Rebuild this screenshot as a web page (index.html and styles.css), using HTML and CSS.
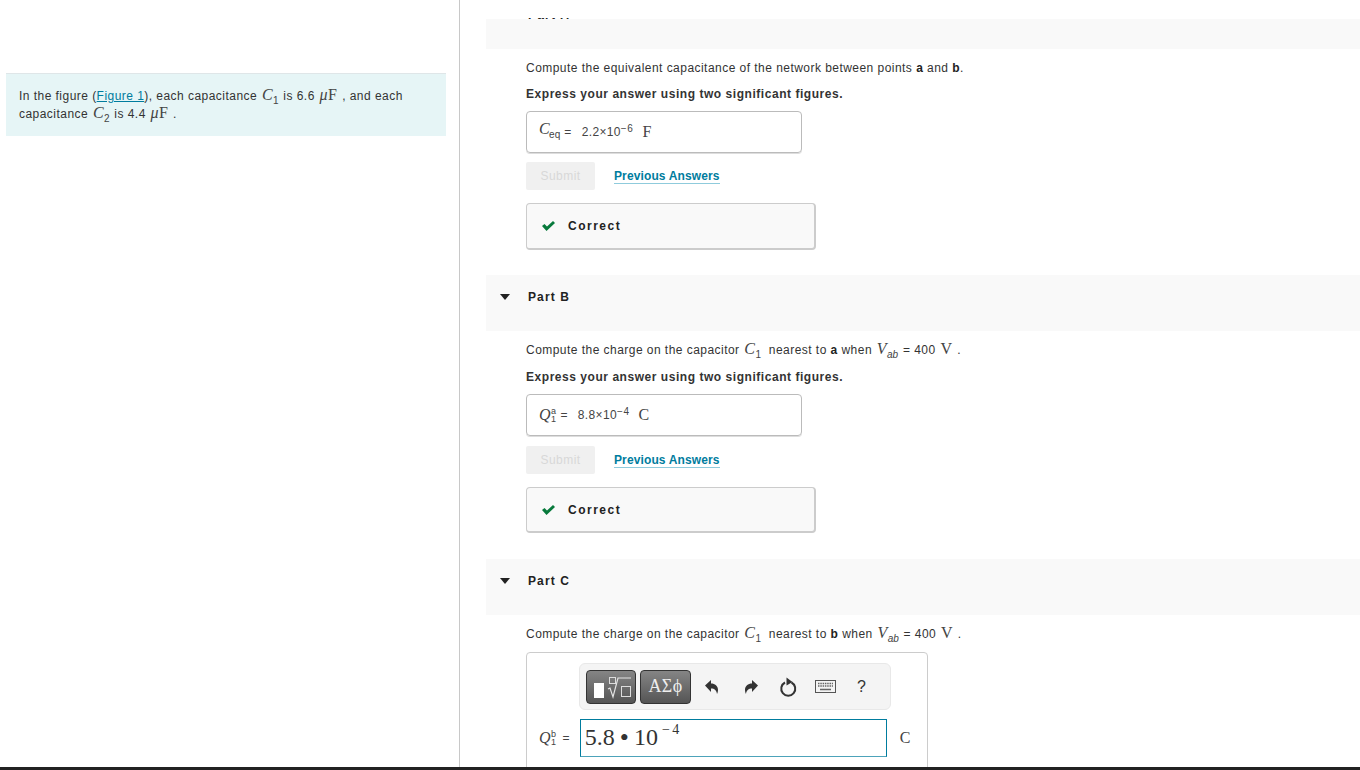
FILE: index.html
```html
<!DOCTYPE html>
<html lang="en">
<head>
<meta charset="utf-8">
<title>Capacitance network</title>
<link rel="stylesheet" href="styles.css">
</head>
<body>
<div class="page">
  <aside class="left">
    <div class="intro">
      In the figure (<a class="link" href="#">Figure 1</a>), each capacitance <span class="m"><i>C</i><sub>1</sub></span> is 6.6 <span class="m"><i>μ</i>F</span> , and each<br>
      capacitance <span class="m"><i>C</i><sub>2</sub></span> is 4.4 <span class="m"><i>μ</i>F</span> .
    </div>
  </aside>
  <main class="right">
    <div class="clip"><div class="clip-window"><span class="clip-text">Part A</span></div></div>
    <div class="part-head short"></div>
    <section class="part-body a">
      <p class="prompt">Compute the equivalent capacitance of the network between points <b>a</b> and <b>b</b>.</p>
      <p class="express">Express your answer using two significant figures.</p>
      <div class="answer">
        <span class="m"><i>C</i><sub class="sans">eq</sub></span><span class="eq">=</span><span class="val">2.2×10<sup>−6</sup></span><span class="m unit">F</span>
      </div>
      <div class="actions">
        <span class="submit">Submit</span>
        <a class="prev" href="#">Previous Answers</a>
      </div>
      <div class="correct">
        <svg class="check" width="15" height="12" viewBox="0 0 15 12"><path d="M1 6l2.500-2 2.500 2.500L12 1l2 2-8.500 8z" fill="#087a3c"/></svg>
        <span>Correct</span>
      </div>
    </section>

    <div class="part-head"><span class="tri"></span><span class="part-title">Part B</span></div>
    <section class="part-body b">
      <p class="prompt">Compute the charge on the capacitor <span class="m cap"><i>C</i><sub>1</sub></span> nearest to <b>a</b> when <span class="m"><i>V</i><sub><i>ab</i></sub></span> = 400 <span class="m">V</span> .</p>
      <p class="express">Express your answer using two significant figures.</p>
      <div class="answer">
        <span class="m stack"><i>Q</i><span class="scripts"><span>a</span><span>1</span></span></span><span class="eq">=</span><span class="val">8.8×10<sup>−4</sup></span><span class="m unit">C</span>
      </div>
      <div class="actions">
        <span class="submit">Submit</span>
        <a class="prev" href="#">Previous Answers</a>
      </div>
      <div class="correct">
        <svg class="check" width="15" height="12" viewBox="0 0 15 12"><path d="M1 6l2.500-2 2.500 2.500L12 1l2 2-8.500 8z" fill="#087a3c"/></svg>
        <span>Correct</span>
      </div>
    </section>

    <div class="part-head"><span class="tri"></span><span class="part-title">Part C</span></div>
    <section class="part-body">
      <p class="prompt">Compute the charge on the capacitor <span class="m cap"><i>C</i><sub>1</sub></span> nearest to <b>b</b> when <span class="m"><i>V</i><sub><i>ab</i></sub></span> = 400 <span class="m">V</span> .</p>
      <div class="editor">
        <div class="toolbar">
          <span class="tool-btn wide">
            <svg width="42" height="28" viewBox="0 0 42 28">
              <rect x="4" y="10" width="10" height="15" fill="#fff"/>
              <rect x="19.500" y="4.500" width="6" height="6" fill="none" stroke="#ddd"/>
              <path d="M18 16l2-1 3 9 5-19h13" fill="none" stroke="#e4e4e4" stroke-width="1.200"/>
              <rect x="31.500" y="13.500" width="9" height="10" fill="none" stroke="#ddd"/>
            </svg>
          </span>
          <span class="tool-btn greek">ΑΣϕ</span>
          <svg class="tool u" width="16" height="16" viewBox="0 0 16 16"><path d="M1 6.500L7 1v3.500c4 0 7 2.500 7 6.500 0 1.500-.5 3-1 4-.3-3.500-2.500-5.500-6-5.500V13z" fill="#333"/></svg>
          <svg class="tool r" width="16" height="16" viewBox="0 0 16 16"><path d="M15 6.500L9 1v3.500c-4 0-7 2.500-7 6.500 0 1.500.5 3 1 4 .3-3.500 2.500-5.500 6-5.500V13z" fill="#333"/></svg>
          <svg class="tool o" width="18" height="20" viewBox="0 0 18 20"><path d="M6 5.500A7 7 0 1 0 12.500 5.500" fill="none" stroke="#333" stroke-width="2"/><path d="M7.500 .5l6 4.500-6 3.500z" fill="#333"/></svg>
          <svg class="tool k" width="21" height="13" viewBox="0 0 21 13"><rect x=".5" y=".5" width="20" height="12" fill="#f4f4f4" stroke="#555"/><path d="M3 3.500h15M3 6h15" stroke="#666" stroke-width="1.500" stroke-dasharray="1.500 .8"/><path d="M5 9.500h11" stroke="#666" stroke-width="1.500"/></svg>
          <span class="help">?</span>
        </div>
        <div class="entry">
          <span class="m stack small"><i>Q</i><span class="scripts"><span>b</span><span>1</span></span></span><span class="eq">=</span>
          <div class="field">5.8 <span class="dot">•</span> 10<sup class="exp">− 4</sup></div>
          <span class="m unit-c">C</span>
        </div>
      </div>
    </section>
  </main>
</div>
<div class="bottom-bar"></div>
</body>
</html>
```

FILE: styles.css
```css
* { box-sizing: border-box; }
html, body { margin: 0; height: 770px; overflow: hidden; background: #fff; }
body { font: 12px/18px "Liberation Sans", Arial, sans-serif; color: #333; letter-spacing: .46px; }
p { margin: 0; }
.page { display: flex; height: 770px; overflow: hidden; }
.left { width: 460px; flex: none; border-right: 1px solid #c8c8c8; padding: 73px 0 0 6px; }
.intro { width: 440px; height: 63px; padding: 13px 13px 0; background: #e6f5f6; border-top: 1px solid #dfe6e8; }
.link { color: #007c9e; text-decoration: underline; }
.m { font-family: "Liberation Serif", serif; font-size: 16px; line-height: 0; letter-spacing: .4px; color: #444; margin: 0 1px; }
.m i { font-style: italic; }
.m sub { font-size: 10px; line-height: 0; font-family: "Liberation Sans", sans-serif; font-style: normal; letter-spacing: 0; }
.m sub.sans { margin-left: -1px; }
.cap { margin-right: 4px; }
.right { flex: 1; padding-left: 26px; min-width: 0; }
.clip { height: 19px; padding: 18px 0 0 42px; }
.clip-window { height: 1px; overflow: hidden; }
.clip-text { display: block; margin-top: -9px; font-weight: bold; line-height: 12px; color: #222; letter-spacing: 1.2px; }
.part-head { height: 56px; background: #f9f9f9; display: flex; align-items: center; padding: 0 0 12px 14px; }
.part-head.short { height: 30px; padding: 0; }
.tri { width: 0; height: 0; border: 5.500px solid transparent; border-top: 6px solid #222; border-bottom: 0; }
.part-title { margin-left: 18px; font-weight: bold; color: #222; letter-spacing: 1.1px; }
.part-body { padding-left: 40px; height: 228px; }
.part-body.a { height: 226px; }
.prompt { padding-top: 10px; height: 37px; }
.prompt b { color: #222; }
.express { font-weight: bold; height: 26px; letter-spacing: .54px; }
.a .prompt { height: 36px; }
.answer { width: 276px; height: 42px; border: 1px solid #bbb; border-radius: 4px; display: flex; align-items: center; padding-left: 11px; box-shadow: 0 1px 0 #ddd; }
.eq { margin: 0 10px 0 3px; color: #444; }
.val { color: #444; letter-spacing: .35px; }
.val sup { font-size: 10px; line-height: 0; vertical-align: 4px; letter-spacing: .6px; }
.unit { margin-left: 9px; }
.stack { display: inline-flex; align-items: center; line-height: 18px; }
.scripts { display: inline-flex; flex-direction: column; font: 9px/8px "Liberation Sans", sans-serif; }
.actions { display: flex; align-items: center; margin-top: 9px; height: 28px; }
.b .actions { margin-top: 10px; }
.submit { width: 69px; height: 28px; line-height: 29px; text-align: center; background: #f0f0f0; color: #d8d8d8; border-radius: 2px; }
.prev { margin: 2px 0 0 19px; font-weight: bold; color: #007c9e; text-decoration: none; border-bottom: 1px solid #8fcbdc; line-height: 13px; letter-spacing: .12px; }
.correct { width: 290px; height: 47px; margin-top: 13px; background: #f9f9f9; border: 1px solid #ccc; border-right-width: 2px; border-bottom-width: 2px; border-radius: 4px; display: flex; align-items: center; padding-left: 14px; font-weight: bold; color: #222; letter-spacing: 1.5px; }
.b .correct { height: 46px; }
.check { margin-right: 12px; }
.editor { width: 402px; height: 140px; border: 1px solid #ccc; border-radius: 4px; padding: 10px 0 0 52px; }
.toolbar { width: 312px; height: 47px; background: #f4f4f4; border: 1px solid #e8e8e8; border-radius: 6px; display: flex; align-items: center; padding-left: 6px; }
.tool-btn { height: 34px; border: 1px solid #333; border-radius: 4px; background: linear-gradient(#858585, #555); color: #fff; display: flex; align-items: center; justify-content: center; flex: none; }
.tool-btn.wide { width: 50px; }
.greek { width: 51px; margin-left: 4px; font: 18px "Liberation Serif", serif; letter-spacing: .3px; color: #eee; }
.tool { flex: none; }
.u { margin-left: 13px; }
.r { margin-left: 23px; }
.o { margin-left: 20px; }
.k { margin-left: 18px; }
.help { margin-left: 21px; font-size: 16px; color: #333; letter-spacing: 0; }
.entry { display: flex; align-items: center; height: 38px; margin-top: 9px; margin-left: -41px; }
.entry .eq { margin: 0 10px 0 5px; }
.field { width: 307px; height: 38px; border: 1px solid #007c9e; border-bottom-color: #4da3ba; padding-left: 4px; font: 24px/34px "Liberation Serif", serif; color: #333; letter-spacing: 0; word-spacing: -1px; flex: none; }
.dot { font-size: 26px; line-height: 0; vertical-align: -1px; }
.exp { font-size: 14px; line-height: 0; vertical-align: 11px; margin-left: 4px; }
.unit-c { margin-left: 13px; }
.bottom-bar { position: fixed; left: 0; right: 0; bottom: 0; height: 3px; background: #222; }
```
